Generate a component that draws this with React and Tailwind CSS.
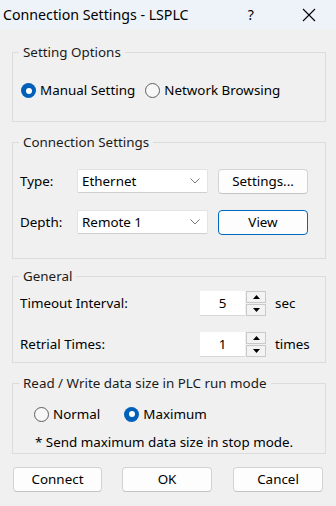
import React from "react";

function Radio({ checked, label, className = "" }) {
  return (
    <div className={"flex items-center gap-[4px] " + className}>
      {checked ? (
        <span className="w-[15px] h-[15px] rounded-full bg-[#005fb8] flex items-center justify-center shrink-0">
          <span className="w-[6px] h-[6px] rounded-full bg-white" />
        </span>
      ) : (
        <span className="w-[15px] h-[15px] rounded-full border border-[#5f5f5f] bg-[#f7f7f7] shrink-0" />
      )}
      <span>{label}</span>
    </div>
  );
}

function Combo({ value }) {
  return (
    <div className="w-[131px] h-[24px] bg-white border border-[#e3e3e3] border-b-[#cfcfcf] rounded-[2px] flex items-center justify-between pl-[4px] pr-[7px]">
      <span>{value}</span>
      <svg width="10" height="6" viewBox="0 0 10 6" fill="none">
        <path d="M0.5 0.5 L5 5 L9.5 0.5" stroke="#7a7a7a" strokeWidth="1" />
      </svg>
    </div>
  );
}

function Btn({ children, className = "", blue = false }) {
  return (
    <div
      className={
        "h-[25px] bg-[#fdfdfd] rounded-[4px] flex items-center justify-center border " +
        (blue ? "border-[#0067c0]" : "border-[#d3d3d3] border-b-[#c3c3c3]") +
        " " +
        className
      }
    >
      {children}
    </div>
  );
}

function Spinner({ value }) {
  return (
    <div className="flex items-stretch h-[25px]">
      <div className="w-[45px] bg-white border-b border-[#d8d8d8] flex items-center justify-center">{value}</div>
      <div className="w-[22px] flex flex-col gap-[1px] px-[1px]">
        <div className="flex-1 border border-[#c9c9c9] bg-[#f3f3f3] flex items-center justify-center">
          <svg width="7" height="4" viewBox="0 0 7 4"><path d="M3.5 0 L7 4 L0 4 Z" fill="#000" /></svg>
        </div>
        <div className="flex-1 border border-[#c9c9c9] bg-[#f3f3f3] flex items-center justify-center">
          <svg width="7" height="4" viewBox="0 0 7 4"><path d="M0 0 L7 0 L3.5 4 Z" fill="#000" /></svg>
        </div>
      </div>
    </div>
  );
}

function Group({ title, className = "", children }) {
  return (
    <fieldset className={"ml-[12px] w-[314px] border border-[#dcdcdc] " + className}>
      <legend className="ml-[6px] px-[4px] leading-[19px] text-[#1b1b1b]">{title}</legend>
      {children}
    </fieldset>
  );
}

export default function App() {
  return (
    <div className="w-[336px] h-[506px] bg-[#f0f0f0] flex flex-col text-[13.4px] text-black font-['Segoe_UI','Noto_Sans',sans-serif] leading-[19px] overflow-hidden">
      <div className="h-[29px] bg-[#eef3f9] flex items-center text-[14.2px]">
        <span className="pl-[3px]">Connection Settings - LSPLC</span>
        <span className="ml-auto mr-[48px]">?</span>
        <svg width="14" height="14" viewBox="0 0 14 14" className="mr-[20px]">
          <path d="M1 1 L13 13 M13 1 L1 13" stroke="#000" strokeWidth="1.1" />
        </svg>
      </div>

      <Group title="Setting Options" className="mt-[14px] h-[79px]">
        <div className="flex items-center mt-[19px] pl-[8px]">
          <Radio checked label="Manual Setting" />
          <Radio label="Network Browsing" className="ml-[10px]" />
        </div>
      </Group>

      <Group title="Connection Settings" className="mt-[11px] h-[126px]">
        <div className="flex flex-col gap-[15px] mt-[16px] pl-[7px]">
          <div className="flex items-center h-[26px]">
            <span className="w-[57px]">Type:</span>
            <Combo value="Ethernet" />
            <Btn className="ml-[10px] w-[90px]">Settings...</Btn>
          </div>
          <div className="flex items-center h-[26px]">
            <span className="w-[57px]">Depth:</span>
            <Combo value="Remote 1" />
            <Btn blue className="ml-[10px] w-[90px]">View</Btn>
          </div>
        </div>
      </Group>

      <Group title="General" className="mt-[8px] h-[96px]">
        <div className="flex flex-col gap-[16px] mt-[5px] pl-[7px]">
          <div className="flex items-center">
            <span className="w-[180px]">Timeout Interval:</span>
            <Spinner value="5" />
            <span className="ml-[8px]">sec</span>
          </div>
          <div className="flex items-center">
            <span className="w-[180px]">Retrial Times:</span>
            <Spinner value="1" />
            <span className="ml-[8px]">times</span>
          </div>
        </div>
      </Group>

      <Group title="Read / Write data size in PLC run mode" className="mt-[11px] h-[80px]">
        <div className="flex items-center mt-[12px] pl-[21px] h-[18px]">
          <Radio label="Normal" />
          <Radio checked label="Maximum" className="ml-[24px]" />
        </div>
        <div className="mt-[10px] pl-[22px]">* Send maximum data size in stop mode.</div>
      </Group>

      <div className="flex mt-[13px]">
        <Btn className="ml-[13px] w-[89px]">Connect</Btn>
        <Btn className="ml-[20px] w-[90px]">OK</Btn>
        <Btn className="ml-[21px] w-[90px]">Cancel</Btn>
      </div>
    </div>
  );
}
